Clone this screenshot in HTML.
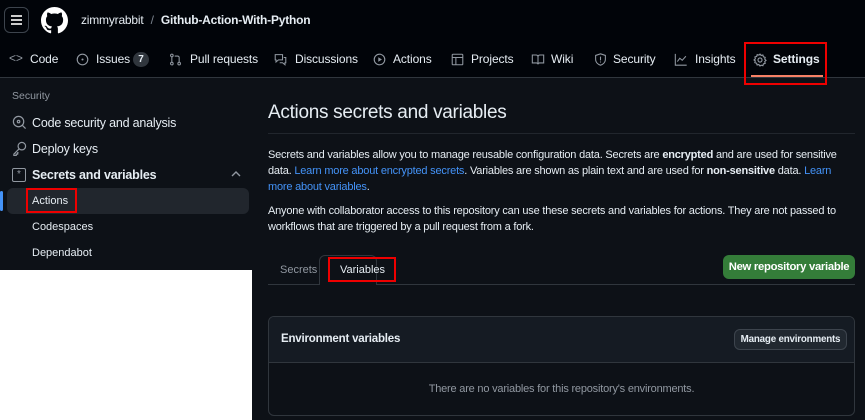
<!DOCTYPE html>
<html><head><meta charset="utf-8"><style>
*{margin:0;padding:0;box-sizing:border-box}
body{width:865px;height:420px;overflow:hidden;background:#0d1117;font-family:"Liberation Sans",sans-serif;color:#e6edf3;position:relative;font-size:12px}
.hdr{position:absolute;left:0;top:0;width:865px;height:78px;background:#010409;border-bottom:1px solid #30363d}
.a{position:absolute;white-space:nowrap}
.nav{top:52px;font-size:12px;color:#e6edf3;letter-spacing:-0.1px}
svg{position:absolute}
.red{position:absolute;border:2px solid #e00}
.side{font-size:12px}
p{position:absolute;left:268px;width:590px;font-size:11px;letter-spacing:-0.2px;line-height:16px;color:#e6edf3}
a{color:#4493f8;text-decoration:none}
</style></head><body>
<div class="hdr"></div>
<div style="position:absolute;left:4px;top:7px;width:25px;height:26px;border:1px solid #3d444d;border-radius:6px"></div>
<div style="position:absolute;left:11px;top:15px;width:11px;height:1.5px;background:#ccc;box-shadow:0 4px #ccc,0 8px #ccc"></div>
<svg style="left:41px;top:7px" width="27" height="27" viewBox="0 0 16 16"><path fill="#fff" d="M8 0C3.58 0 0 3.58 0 8c0 3.54 2.290 6.53 5.470 7.59.4.07.55-.17.55-.38 0-.19-.01-.82-.01-1.49-2.01.37-2.530-.49-2.690-.94-.09-.23-.48-.94-.82-1.13-.28-.15-.68-.52-.01-.53.63-.01 1.080.58 1.230.82.72 1.21 1.870.87 2.330.66.07-.52.28-.87.51-1.07-1.78-.2-3.640-.89-3.640-3.95 0-.87.31-1.59.82-2.15-.08-.2-.36-1.02.08-2.12 0 0 .67-.21 2.2.82.64-.18 1.32-.27 2-.27.68 0 1.36.09 2 .27 1.53-1.04 2.2-.82 2.2-.82.44 1.1.16 1.92.08 2.12.51.56.82 1.27.82 2.15 0 3.07-1.870 3.75-3.650 3.95.29.25.54.73.54 1.48 0 1.07-.01 1.93-.01 2.2 0 .21.15.46.55.38A8.013 8.013 0 0016 8c0-4.42-3.58-8-8-8z"/></svg>
<div class="a" style="left:81px;top:13px;font-size:12px;letter-spacing:-0.2px">zimmyrabbit <span style="color:#7d8590;margin:0 4px">/</span> <b>Github-Action-With-Python</b></div>

<div class="a nav" style="left:9px;color:#9198a1;top:51px">&lt;&gt;</div>
<div class="a nav" style="left:30px">Code</div>
<svg style="left:76px;top:53px" width="13" height="13" viewBox="0 0 16 16"><circle cx="8" cy="8" r="6.5" fill="none" stroke="#9198a1" stroke-width="1.4"/><circle cx="8" cy="8" r="1.3" fill="#9198a1"/></svg>
<div class="a nav" style="left:96px">Issues</div>
<div class="a" style="left:133px;top:52px;width:16px;height:15px;border-radius:8px;background:#30363d;font-size:10px;font-weight:bold;text-align:center;line-height:15px">7</div>
<svg style="left:169px;top:53px" width="13" height="13" viewBox="0 0 16 16" fill="none" stroke="#9198a1" stroke-width="1.3"><circle cx="3.5" cy="3" r="1.6"/><circle cx="3.5" cy="13" r="1.6"/><circle cx="12.5" cy="13" r="1.6"/><path d="M3.5 4.6v6.8M12.5 11.4V5.5c0-1-1-1.7-2-1.7H7"/></svg>
<div class="a nav" style="left:190px">Pull requests</div>
<svg style="left:274px;top:53px" width="13" height="13" viewBox="0 0 16 16" fill="none" stroke="#9198a1" stroke-width="1.3"><path d="M1.5 2h9v6.5h-5l-3 2.5V8.5h-1zM12 5.5h2.5v6.5h-1v2.5l-3-2.5H7"/></svg>
<div class="a nav" style="left:295px">Discussions</div>
<svg style="left:373px;top:53px" width="13" height="13" viewBox="0 0 16 16"><circle cx="8" cy="8" r="6.5" fill="none" stroke="#9198a1" stroke-width="1.4"/><path d="M6.5 5.2v5.6L11 8z" fill="#9198a1"/></svg>
<div class="a nav" style="left:393px">Actions</div>
<svg style="left:451px;top:53px" width="13" height="13" viewBox="0 0 16 16" fill="none" stroke="#9198a1" stroke-width="1.3"><rect x="1.5" y="1.5" width="13" height="13" rx="1"/><path d="M1.5 5.5h13M6 5.5v9"/></svg>
<div class="a nav" style="left:471px">Projects</div>
<svg style="left:531px;top:53px" width="14" height="13" viewBox="0 0 16 16" fill="none" stroke="#9198a1" stroke-width="1.3"><path d="M1 2.5h4.5c1.5 0 2.5 1 2.5 2.5v9c0-1-1-1.8-2-1.8H1zM15 2.5h-4.5C9 2.5 8 3.5 8 5v9c0-1 1-1.8 2-1.8H15z"/></svg>
<div class="a nav" style="left:551px">Wiki</div>
<svg style="left:594px;top:53px" width="13" height="13" viewBox="0 0 16 16" fill="none" stroke="#9198a1" stroke-width="1.3"><path d="M8 1l6 2v5c0 3.5-3 6-6 7-3-1-6-3.5-6-7V3z"/><path d="M8 4.5v4.5M8 10.5v1.2"/></svg>
<div class="a nav" style="left:613px">Security</div>
<svg style="left:674px;top:53px" width="14" height="13" viewBox="0 0 16 16" fill="none" stroke="#9198a1" stroke-width="1.3"><path d="M1 1v14h14M3.5 10.5l3-4 3 2.5 4.5-5"/></svg>
<div class="a nav" style="left:695px">Insights</div>
<svg style="left:753px;top:53px" width="14" height="14" viewBox="0 0 16 16" fill="none" stroke="#9198a1" stroke-width="1.3"><circle cx="8" cy="8" r="2.3"/><path d="M8 1.2l1.3 1.6 2-.5.6 2 2 .7-.5 2 1.5 1.4-1.5 1.4.5 2-2 .7-.6 2-2-.5L8 14.8l-1.300-1.6-2 .5-.6-2-2-.7.5-2L1.200 8l1.500-1.4-.5-2 2-.7.6-2 2 .5z"/></svg>
<div class="a nav" style="left:773px;font-weight:bold">Settings</div>
<div style="position:absolute;left:751px;top:75px;width:72px;height:2px;background:#f78166"></div>
<div class="red" style="left:744px;top:42px;width:83px;height:43px"></div>

<div class="a" style="left:12px;top:90px;font-size:10.5px;color:#9198a1">Security</div>
<svg style="left:12px;top:115px" width="15" height="15" viewBox="0 0 16 16" fill="none" stroke="#9198a1" stroke-width="1.3"><circle cx="7" cy="7" r="5.5"/><path d="M11 11l3.5 3.5"/><circle cx="7" cy="7" r="1.3"/></svg>
<div class="a side" style="left:32px;top:116px;font-size:12.5px;letter-spacing:-0.2px">Code security and analysis</div>
<svg style="left:12px;top:141px" width="15" height="15" viewBox="0 0 16 16" fill="none" stroke="#9198a1" stroke-width="1.3"><circle cx="10.5" cy="5.5" r="4"/><path d="M7.5 8.5L2 14v1.5h2.5V14H6v-1.5h1"/></svg>
<div class="a side" style="left:32px;top:142px;font-size:12.5px;letter-spacing:-0.2px">Deploy keys</div>
<div style="position:absolute;left:12px;top:168px;width:14px;height:14px;border:1.3px solid #9198a1;border-radius:2px;color:#9198a1;font-size:10px;text-align:center;line-height:12px">*</div>
<div class="a side" style="left:32px;top:168px;font-size:12.5px;font-weight:bold;letter-spacing:-0.2px">Secrets and variables</div>
<svg style="left:230px;top:170px" width="12" height="8" viewBox="0 0 12 8" fill="none" stroke="#9198a1" stroke-width="1.4"><path d="M2 6l4-4 4 4"/></svg>
<div style="position:absolute;left:7px;top:188px;width:242px;height:26px;background:#21262d;border-radius:6px"></div>
<div style="position:absolute;left:0;top:191px;width:3px;height:20px;background:#4493f8;border-radius:2px"></div>
<div class="a" style="left:32px;top:195px;font-size:11px">Actions</div>
<div class="red" style="left:26px;top:188px;width:51px;height:25px"></div>
<div class="a" style="left:32px;top:221px;font-size:11px">Codespaces</div>
<div class="a" style="left:32px;top:247px;font-size:11px">Dependabot</div>
<div style="position:absolute;left:0;top:270px;width:252px;height:150px;background:#fff"></div>

<div class="a" style="left:268px;top:102px;font-size:19px;letter-spacing:-0.3px">Actions secrets and variables</div>
<div style="position:absolute;left:268px;top:133px;width:587px;height:1px;background:#21262d"></div>
<p style="top:147px">Secrets and variables allow you to manage reusable configuration data. Secrets are <b>encrypted</b> and are used for sensitive data. <a>Learn more about encrypted secrets</a>. Variables are shown as plain text and are used for <b>non-sensitive</b> data. <a>Learn more about variables</a>.</p>
<p style="top:203px">Anyone with collaborator access to this repository can use these secrets and variables for actions. They are not passed to workflows that are triggered by a pull request from a fork.</p>

<div style="position:absolute;left:268px;top:284px;width:587px;height:1px;background:#30363d"></div>
<div style="position:absolute;left:319px;top:255px;width:58px;height:30px;border:1px solid #30363d;border-bottom:none;border-radius:6px 6px 0 0;background:#0d1117"></div>
<div class="a" style="left:280px;top:264px;font-size:11px;color:#9198a1">Secrets</div>
<div class="a" style="left:340px;top:264px;font-size:11px">Variables</div>
<div class="red" style="left:328px;top:257px;width:68px;height:25px"></div>
<div class="a" style="left:723px;top:255px;width:132px;height:24px;background:#347d39;border-radius:6px;font-size:11.3px;letter-spacing:-0.3px;font-weight:bold;text-align:center;line-height:24px;color:#fff">New repository variable</div>

<div style="position:absolute;left:268px;top:316px;width:587px;height:100px;border:1px solid #30363d;border-radius:6px;overflow:hidden">
<div style="height:46px;background:#151b23;border-bottom:1px solid #30363d"></div></div>
<div class="a" style="left:281px;top:333px;font-size:11.5px;font-weight:bold;letter-spacing:-0.2px">Environment variables</div>
<div class="a" style="left:734px;top:329px;width:113px;height:21px;background:#212830;border:1px solid #3d444d;border-radius:6px;font-size:9.8px;letter-spacing:-0.2px;font-weight:bold;text-align:center;line-height:19px">Manage environments</div>
<div class="a" style="left:268px;top:383px;width:587px;text-align:center;font-size:11px;letter-spacing:-0.2px;color:#9198a1">There are no variables for this repository's environments.</div>
</body></html>
